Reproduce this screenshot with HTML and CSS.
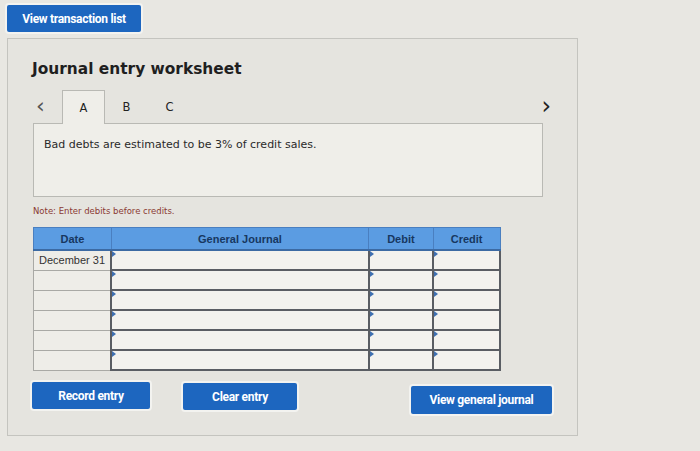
FILE: index.html
```html
<!DOCTYPE html>
<html>
<head>
<meta charset="utf-8">
<link rel="stylesheet" href="styles.css">
</head>
<body>
<button class="btn top-btn">View transaction list</button>
<div class="panel">
  <h1 class="title">Journal entry worksheet</h1>
  <div class="tabs">
    <span class="arrow left">&lsaquo;</span>
    <span class="tab active">A</span>
    <span class="tab">B</span>
    <span class="tab">C</span>
    <span class="spacer"></span>
    <span class="arrow right">&rsaquo;</span>
  </div>
  <div class="desc">Bad debts are estimated to be 3% of credit sales.</div>
  <div class="note">Note: Enter debits before credits.</div>
  <table class="journal">
    <thead>
      <tr><th class="c-date">Date</th><th class="c-gj">General Journal</th><th class="c-dr">Debit</th><th class="c-cr">Credit</th></tr>
    </thead>
    <tbody>
      <tr><td class="date">December 31</td><td class="inp"></td><td class="inp"></td><td class="inp"></td></tr>
      <tr><td class="date"></td><td class="inp"></td><td class="inp"></td><td class="inp"></td></tr>
      <tr><td class="date"></td><td class="inp"></td><td class="inp"></td><td class="inp"></td></tr>
      <tr><td class="date"></td><td class="inp"></td><td class="inp"></td><td class="inp"></td></tr>
      <tr><td class="date"></td><td class="inp"></td><td class="inp"></td><td class="inp"></td></tr>
      <tr><td class="date"></td><td class="inp"></td><td class="inp"></td><td class="inp"></td></tr>
    </tbody>
  </table>
  <div class="actions">
    <button class="btn record">Record entry</button>
    <button class="btn clear">Clear entry</button>
    <span class="spacer"></span>
    <button class="btn view">View general journal</button>
  </div>
</div>
</body>
</html>
```
FILE: styles.css
```css
html, body {
  margin: 0;
  padding: 0;
}
body {
  width: 700px;
  height: 451px;
  background: #e8e7e2;
  padding: 5px 0 0 7px;
  box-sizing: border-box;
  font-family: "DejaVu Sans", Verdana, sans-serif;
  overflow: hidden;
}
.btn {
  display: block;
  border: none;
  border-radius: 2px;
  background: #1d66bf;
  color: #ffffff;
  font-family: Roboto, "Liberation Sans", Arial, sans-serif;
  font-weight: 700;
  font-size: 12px;
  letter-spacing: -0.3px;
  padding: 0;
  box-shadow: 0 0 0 2px #f3f3f0;
}
.top-btn {
  width: 134px;
  height: 27px;
}
.panel {
  margin-top: 6px;
  width: 571px;
  height: 398px;
  box-sizing: border-box;
  border: 1px solid #c4c4bf;
  background: #e5e4df;
  padding: 0 0 0 25px;
}
.title {
  margin: 20px 0 0 -1px;
  font-size: 15.4px;
  font-weight: 700;
  color: #1f1f1f;
  line-height: 20px;
}
.tabs {
  display: flex;
  align-items: flex-end;
  margin-top: 10px;
  height: 34px;
  width: 510px;
}
.arrow {
  font-size: 22px;
  line-height: 24px;
  color: #333;
  align-self: center;
}
.arrow.left {
  margin-left: 3px;
  width: 26px;
  color: #555;
}
.arrow.right {
  margin-right: -8px;
  font-size: 24px;
  color: #222;
}
.tab {
  width: 43px;
  height: 33px;
  box-sizing: border-box;
  display: flex;
  align-items: center;
  justify-content: center;
  font-size: 11.5px;
  color: #222;
  margin-right: 0;
}
.tab.active {
  border: 1px solid #b9b9b4;
  border-bottom: none;
  background: #efeee9;
  height: 34px;
  margin-bottom: -1px;
  position: relative;
}
.spacer {
  flex: 1;
}
.desc {
  width: 510px;
  height: 74px;
  box-sizing: border-box;
  border: 1px solid #b9b9b4;
  background: #efeee9;
  padding: 14px 0 0 10px;
  font-size: 11px;
  color: #2a2a2a;
}
.note {
  margin-top: 9px;
  font-size: 8.5px;
  color: #8a3a34;
  height: 21px;
}
.journal {
  border-collapse: collapse;
  width: 468px;
  font-family: "Liberation Sans", Arial, sans-serif;
  font-size: 11px;
}
.journal th {
  background: #5b9ce2;
  color: #173760;
  font-weight: 700;
  height: 21px;
  padding: 0;
  border: 1px solid #4a7fc0;
  border-bottom: 2px solid #3c6aa3;
}
.c-date { width: 77px; }
.c-gj { width: 258px; }
.c-dr { width: 64px; }
.c-cr { width: 66px; }
.journal td {
  height: 18px;
  padding: 0;
}
.journal td.date {
  border: 1px solid #a9a9a5;
  background: #eeede8;
  color: #333;
  padding-left: 5px;
  font-size: 11px;
}
.journal td.inp {
  border: 2px solid #5a5d63;
  background: #f3f2ee;
  position: relative;
}
.journal td.inp::before {
  content: "";
  position: absolute;
  left: 0;
  top: 0;
  border-left: 4px solid #3f6fb0;
  border-top: 3px solid transparent;
  border-bottom: 3px solid transparent;
}
.actions {
  display: flex;
  align-items: flex-start;
  margin-top: 11px;
  width: 520px;
  margin-left: -1px;
}
.record {
  width: 118px;
  height: 27px;
}
.clear {
  width: 114px;
  height: 27px;
  margin-left: 33px;
  margin-top: 1px;
}
.view {
  width: 141px;
  height: 28px;
  margin-top: 4px;
}
```
